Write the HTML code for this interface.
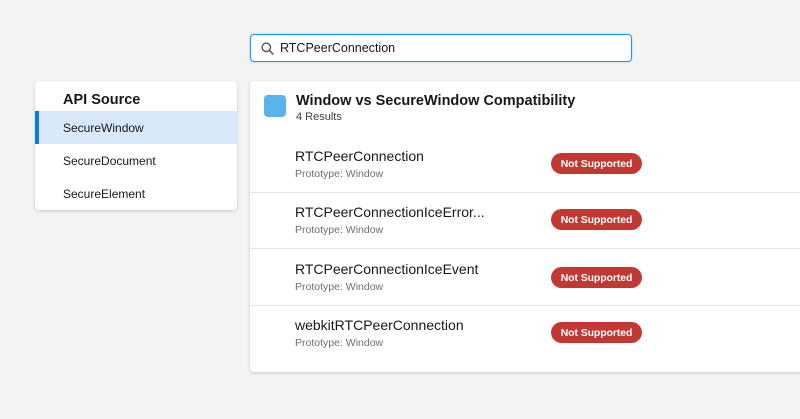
<!DOCTYPE html>
<html><head><meta charset="utf-8"><style>
*{box-sizing:border-box;margin:0;padding:0}
body{width:800px;height:419px;background:#f3f3f3;font-family:"Liberation Sans",sans-serif;color:#181818;position:relative;overflow:hidden}
.search{position:absolute;left:250px;top:34px;width:382px;height:28px;background:#fff;border:1px solid #1b96ff;border-radius:4px;box-shadow:0 0 2px #9ccbf5}
.search svg{position:absolute;left:10px;top:7px}
.search span{position:absolute;left:29px;top:6px;font-size:12.5px;color:#181818}
.left{position:absolute;left:35px;top:81px;width:202px;height:129px;background:#fff;border-radius:4px;box-shadow:0 1px 3px rgba(0,0,0,.18)}
.left h2{position:absolute;left:28px;top:11px;font-size:14.5px;font-weight:bold}
.item{position:absolute;left:0;width:202px;height:33px;font-size:12px;padding:10px 0 0 28px}
.item.act{background:#d8e9fa;border-left:4px solid #0b7ad6;padding-left:24px}
.right{position:absolute;left:250px;top:81px;width:560px;height:291px;background:#fff;border-radius:4px;box-shadow:0 1px 3px rgba(0,0,0,.18)}
.icon{position:absolute;left:14px;top:14px;width:22px;height:22px;background:#5bb3ee;border-radius:4px}
.ttl{position:absolute;left:46px;top:12px;font-size:14.5px;font-weight:bold}
.cnt{position:absolute;left:46px;top:30px;font-size:11px;color:#3e3e3c}
.row{position:absolute;left:0;width:560px;height:56px;border-bottom:1px solid #e5e5e5}
.row .n{position:absolute;left:45px;top:7px;font-size:14px}
.row .p{position:absolute;left:45px;top:28px;font-size:10.5px;color:#706e6b}
.badge{position:absolute;left:301px;top:12px;width:91px;height:21px;border-radius:11px;background:#c23934;color:#fff;font-size:10.5px;font-weight:bold;text-align:center;line-height:22px;letter-spacing:-.1px}
</style></head><body>
<div class="search"><svg width="13" height="13" viewBox="0 0 13 13"><circle cx="5.3" cy="5.3" r="4.2" fill="none" stroke="#555" stroke-width="1.4"/><line x1="8.4" y1="8.4" x2="12" y2="12" stroke="#555" stroke-width="1.5" stroke-linecap="round"/></svg><span>RTCPeerConnection</span></div>
<div class="left"><h2>API Source</h2>
<div class="item act" style="top:30px">SecureWindow</div>
<div class="item" style="top:63px">SecureDocument</div>
<div class="item" style="top:96px">SecureElement</div></div>
<div class="right">
<div class="icon"></div><div class="ttl">Window vs SecureWindow Compatibility</div><div class="cnt">4 Results</div>
<div class="row" style="top:56px;height:56px"><div class="n" style="top:11px">RTCPeerConnection</div><div class="p" style="top:31px">Prototype: Window</div><div class="badge" style="top:16px">Not Supported</div></div>
<div class="row" style="top:112px"><div class="n" style="top:11px">RTCPeerConnectionIceError...</div><div class="p" style="top:31px">Prototype: Window</div><div class="badge" style="top:16px">Not Supported</div></div>
<div class="row" style="top:168px;height:57px"><div class="n" style="top:12px">RTCPeerConnectionIceEvent</div><div class="p" style="top:32px">Prototype: Window</div><div class="badge" style="top:18px">Not Supported</div></div>
<div class="row" style="top:225px;border:none"><div class="n" style="top:11px">webkitRTCPeerConnection</div><div class="p" style="top:31px">Prototype: Window</div><div class="badge" style="top:16px">Not Supported</div></div>
</div>
</body></html>
